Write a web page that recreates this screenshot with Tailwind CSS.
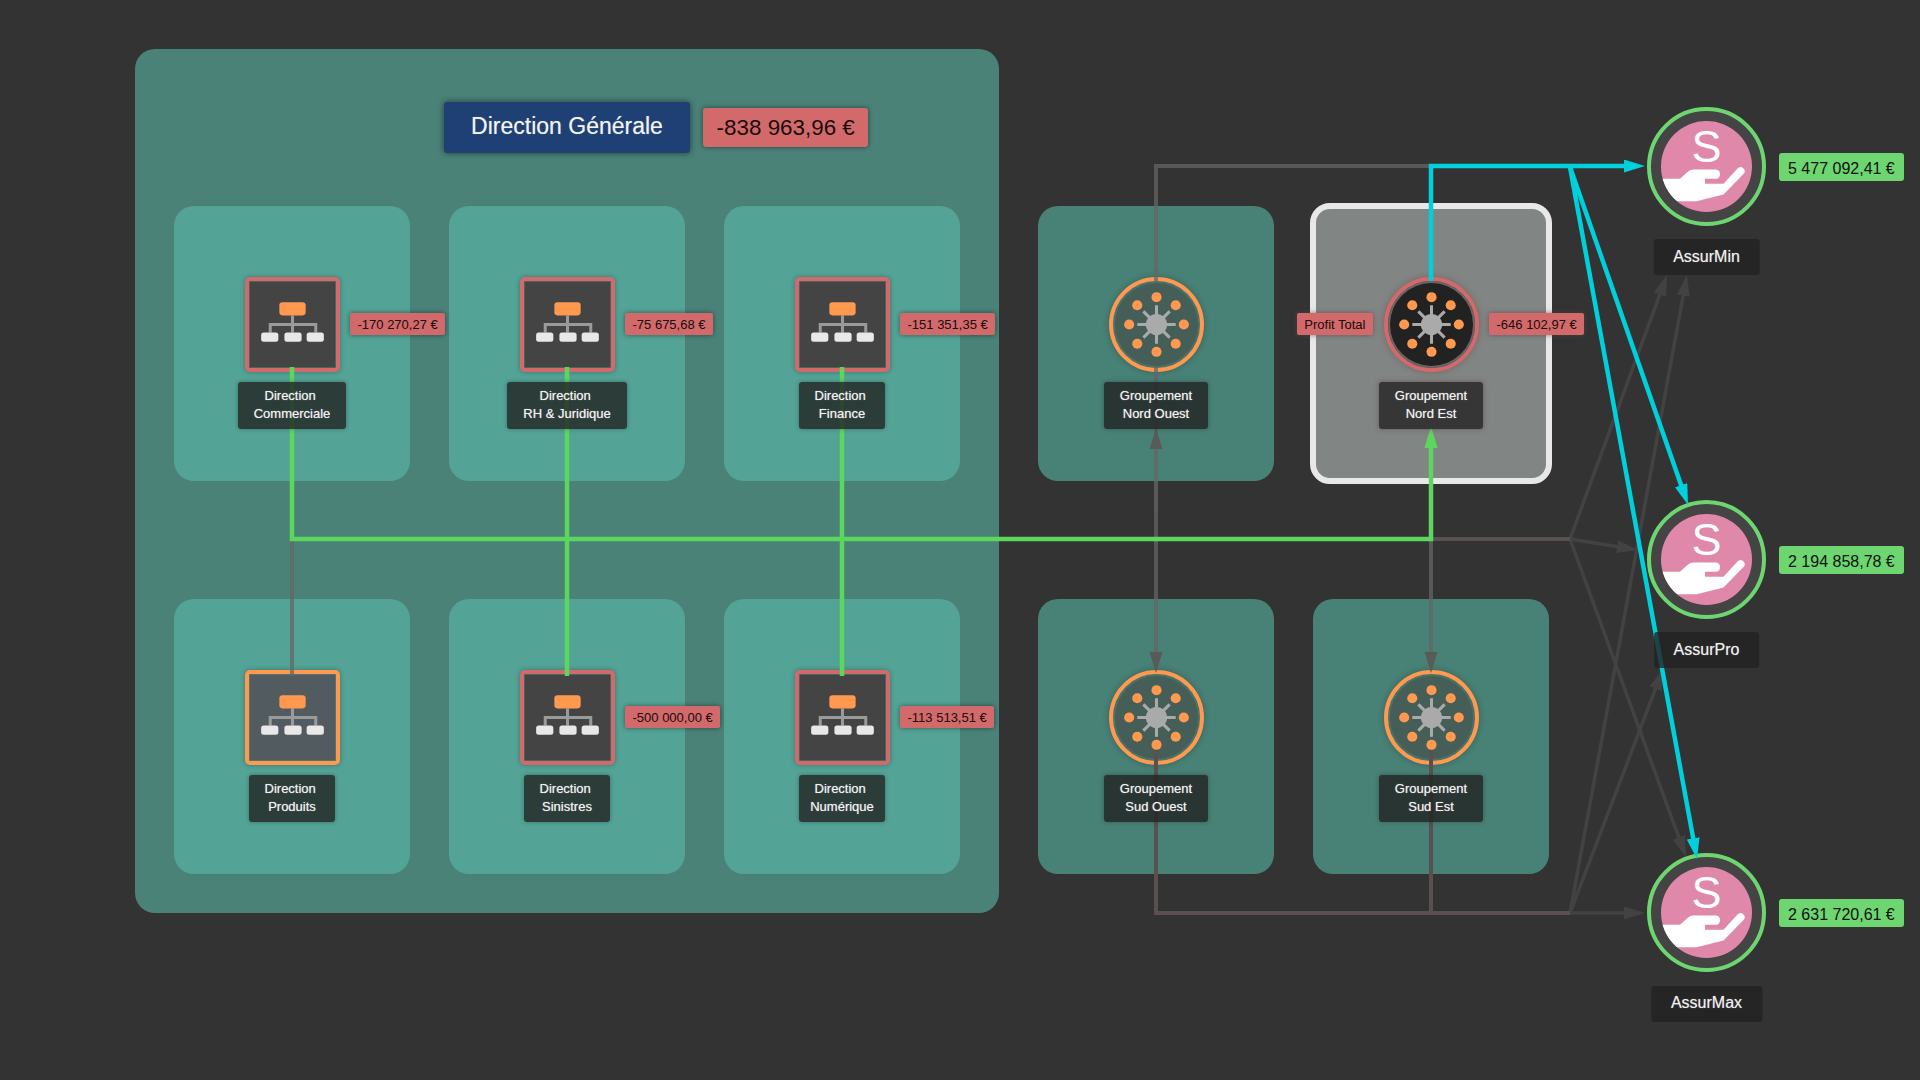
<!DOCTYPE html>
<html lang="fr">
<head>
    <meta charset="UTF-8">
    <title>Direction Générale - Groupements</title>
    <script src="https://cdn.jsdelivr.net/npm/@tailwindcss/browser@4"></script>
</head>
<body class="bg-[#333] font-['Liberation_Sans',Arial,sans-serif]">

    <!-- icones -->
    <svg class="hidden">
        <symbol id="org" viewBox="4 4 86 86">
            <path d="M47 38V55M25 55V47H70V55" fill="none" stroke="#9a9a9a" stroke-width="3"/>
            <rect x="34" y="25" width="26" height="13" rx="3" fill="#ff9950"/>
            <rect x="16" y="55" width="17" height="9" rx="2.5" fill="#e8e8e8"/>
            <rect x="39" y="55" width="17" height="9" rx="2.5" fill="#e8e8e8"/>
            <rect x="61" y="55" width="17" height="9" rx="2.5" fill="#e8e8e8"/>
        </symbol>
        <symbol id="virus" viewBox="4 4 86 86">
            <path d="M47 28V66M28 47H66M34 34L60 60M60 34L34 60" stroke="#aaa" stroke-width="3" fill="none"/>
            <circle cx="47" cy="47" r="10.5" fill="#aaa"/>
            <g fill="#ff9950">
                <circle cx="47" cy="20" r="5"/><circle cx="47" cy="74" r="5"/>
                <circle cx="20" cy="47" r="5"/><circle cx="74" cy="47" r="5"/>
                <circle cx="28" cy="28" r="5"/><circle cx="66" cy="28" r="5"/>
                <circle cx="28" cy="66" r="5"/><circle cx="66" cy="66" r="5"/>
            </g>
        </symbol>
        <symbol id="assur" viewBox="-45.5 -45.5 91 91">
            <path fill="#fff" d="M-50 12.3H-26.5L-19 5.5Q-17 3-13 3H9.5A4.7 4.7 0 0 1 9.5 12.3H-1.5V17.3H17L31 2A4 4 0 0 1 37 7.5L17 28L-10 34.7H-50Z"/>
            <text x="0" y="-5" text-anchor="middle" font-size="45" fill="#fff" font-family="Liberation Sans">S</text>
        </symbol>
    </svg>

    <div class="relative w-[1920px] h-[1080px] overflow-hidden flex items-start pt-[49px] pl-[135px]">

        <!-- liens -->
        <svg class="absolute inset-0 z-10 w-[1920px] h-[1080px]" fill="none">
            <defs>
                <marker id="headCyan" viewBox="0 0 21 13" refX="10" refY="6.5" markerWidth="21" markerHeight="13" markerUnits="userSpaceOnUse" orient="auto"><path d="M0 0L21 6.5L0 13Z" fill="#00d0dc"/></marker>
                <marker id="headFan" viewBox="0 0 21 13" refX="10" refY="6.5" markerWidth="21" markerHeight="13" markerUnits="userSpaceOnUse" orient="auto"><path d="M0 0L21 6.5L0 13Z" fill="#666"/></marker>
            </defs>

            <!-- sorties vers les produits -->
            <g stroke="#666" stroke-width="3.5" opacity=".3">
                <path d="M1570 539L1663.2 285.3" marker-end="url(#headFan)"/>
                <path d="M1570 539L1627.1 548.2" marker-end="url(#headFan)"/>
                <path d="M1570 539L1682.2 846.7" marker-end="url(#headFan)"/>
                <path d="M1570 913L1634 913" marker-end="url(#headFan)"/>
                <path d="M1570 913L1659.1 679.3" marker-end="url(#headFan)"/>
                <path d="M1570 913L1685 285.8" marker-end="url(#headFan)"/>
            </g>

            <!-- gris -->
            <g stroke="#666" stroke-width="4" opacity=".75">
                <path d="M292 539V676"/>
                <path d="M1156 281V166H1431"/>
                <path d="M1156 367V660"/>
                <path d="M1431 539V660"/>
            </g>
            <g stroke="#5a5050" stroke-width="4">
                <path d="M1156 750V913H1570"/>
                <path d="M1431 750V913"/>
                <path d="M1431 539H1570"/>
            </g>
            <g fill="#595b59">
                <path d="M1156 428L1149.5 449H1162.5Z"/>
                <path d="M1156 673L1149.5 652H1162.5Z"/>
                <path d="M1431 673L1424.5 652H1437.5Z"/>
            </g>

            <!-- vert -->
            <g stroke="#5cd65c" stroke-width="4.5">
                <path d="M292 367V539H1431V445"/>
                <path d="M567 367V676"/>
                <path d="M842 367V676"/>
            </g>
            <path d="M1431 426L1424.5 448H1437.5Z" fill="#5cd65c"/>

            <!-- cyan -->
            <g stroke="#00d0dc" stroke-width="4.5">
                <path d="M1431 281V166H1634" marker-end="url(#headCyan)"/>
                <path d="M1570 167L1684.4 494.6" marker-end="url(#headCyan)"/>
                <path d="M1570 167L1695 848.2" marker-end="url(#headCyan)"/>
            </g>
        </svg>

        <!-- direction generale -->
        <div class="w-[864px] h-[864px] shrink-0 rounded-[20px] bg-[#4a8278] pt-[53px] px-[39px]">
            <div class="flex justify-center mb-[53px]">
                <div class="relative h-[51px] px-[27px] pb-[3px] flex items-center rounded-[3px] bg-[#1f4075] text-[23px] text-[#f4f4f4] [text-shadow:0_0_1px_rgba(255,255,255,.4)] shadow-[0_0_6px_rgba(0,0,0,.55)]">
                    Direction Générale
                    <div class="absolute left-[259px] top-[6px] h-[39px] px-[13.5px] flex items-center whitespace-nowrap rounded-[3px] bg-[#d26a6c] text-[22.4px] text-[#1a0a0a] [text-shadow:none] shadow-[0_0_5px_rgba(0,0,0,.5)]">-838 963,96 €</div>
                </div>
            </div>

            <div class="grid grid-cols-[repeat(3,236px)] gap-x-[39px] gap-y-[118px]">
                <div class="h-[275px] rounded-[20px] bg-[#53a396] flex flex-col items-center pt-[70.5px]">
                    <div class="relative w-[95px] h-[95px] rounded-[5px] border-4 border-[#d26a6c] bg-[#444] shadow-[0_0_5px_rgba(0,0,0,.3),inset_0_0_0_1px_rgba(83,163,150,.35)]">
                        <svg class="w-full h-full"><use href="#org"/></svg>
                        <div class="absolute z-20 left-[101.5px] top-[32.5px] h-[22px] px-[7.5px] pt-[2px] flex items-center whitespace-nowrap rounded-[2px] bg-[#d26a6c] text-[13px] text-[#1a0a0a] shadow-[0_0_5px_rgba(0,0,0,.45)]">-170 270,27 €</div>
                    </div>
                    <div class="relative z-20 mt-[10.5px] h-[47px] px-[16px] pb-[2px] flex items-center text-center rounded-[3px] bg-[#222]/80 text-[13px] leading-[18px] text-[#f2f2f2] [text-shadow:0_0_1px_rgba(255,255,255,.6)] shadow-[0_0_4px_rgba(0,0,0,.3)]">Direction&nbsp;<br>Commerciale</div>
                </div>
                <div class="h-[275px] rounded-[20px] bg-[#53a396] flex flex-col items-center pt-[70.5px]">
                    <div class="relative w-[95px] h-[95px] rounded-[5px] border-4 border-[#d26a6c] bg-[#444] shadow-[0_0_5px_rgba(0,0,0,.3),inset_0_0_0_1px_rgba(83,163,150,.35)]">
                        <svg class="w-full h-full"><use href="#org"/></svg>
                        <div class="absolute z-20 left-[101.5px] top-[32.5px] h-[22px] px-[7.5px] pt-[2px] flex items-center whitespace-nowrap rounded-[2px] bg-[#d26a6c] text-[13px] text-[#1a0a0a] shadow-[0_0_5px_rgba(0,0,0,.45)]">-75 675,68 €</div>
                    </div>
                    <div class="relative z-20 mt-[10.5px] h-[47px] px-[16px] pb-[2px] flex items-center text-center rounded-[3px] bg-[#222]/80 text-[13px] leading-[18px] text-[#f2f2f2] [text-shadow:0_0_1px_rgba(255,255,255,.6)] shadow-[0_0_4px_rgba(0,0,0,.3)]">Direction&nbsp;<br>RH &amp; Juridique</div>
                </div>
                <div class="h-[275px] rounded-[20px] bg-[#53a396] flex flex-col items-center pt-[70.5px]">
                    <div class="relative w-[95px] h-[95px] rounded-[5px] border-4 border-[#d26a6c] bg-[#444] shadow-[0_0_5px_rgba(0,0,0,.3),inset_0_0_0_1px_rgba(83,163,150,.35)]">
                        <svg class="w-full h-full"><use href="#org"/></svg>
                        <div class="absolute z-20 left-[101.5px] top-[32.5px] h-[22px] px-[7.5px] pt-[2px] flex items-center whitespace-nowrap rounded-[2px] bg-[#d26a6c] text-[13px] text-[#1a0a0a] shadow-[0_0_5px_rgba(0,0,0,.45)]">-151 351,35 €</div>
                    </div>
                    <div class="relative z-20 mt-[10.5px] h-[47px] px-[16px] pb-[2px] flex items-center text-center rounded-[3px] bg-[#222]/80 text-[13px] leading-[18px] text-[#f2f2f2] [text-shadow:0_0_1px_rgba(255,255,255,.6)] shadow-[0_0_4px_rgba(0,0,0,.3)]">Direction&nbsp;<br>Finance</div>
                </div>
                <div class="h-[275px] rounded-[20px] bg-[#53a396] flex flex-col items-center pt-[70.5px]">
                    <div class="relative w-[95px] h-[95px] rounded-[5px] border-4 border-[#ff9950] bg-[#525c60] shadow-[0_0_5px_rgba(0,0,0,.3),inset_0_0_0_1px_rgba(83,163,150,.35)]">
                        <svg class="w-full h-full"><use href="#org"/></svg>
                    </div>
                    <div class="relative z-20 mt-[10.5px] h-[47px] px-[16px] pb-[2px] flex items-center text-center rounded-[3px] bg-[#222]/80 text-[13px] leading-[18px] text-[#f2f2f2] [text-shadow:0_0_1px_rgba(255,255,255,.6)] shadow-[0_0_4px_rgba(0,0,0,.3)]">Direction&nbsp;<br>Produits</div>
                </div>
                <div class="h-[275px] rounded-[20px] bg-[#53a396] flex flex-col items-center pt-[70.5px]">
                    <div class="relative w-[95px] h-[95px] rounded-[5px] border-4 border-[#d26a6c] bg-[#444] shadow-[0_0_5px_rgba(0,0,0,.3),inset_0_0_0_1px_rgba(83,163,150,.35)]">
                        <svg class="w-full h-full"><use href="#org"/></svg>
                        <div class="absolute z-20 left-[101.5px] top-[32.5px] h-[22px] px-[7.5px] pt-[2px] flex items-center whitespace-nowrap rounded-[2px] bg-[#d26a6c] text-[13px] text-[#1a0a0a] shadow-[0_0_5px_rgba(0,0,0,.45)]">-500 000,00 €</div>
                    </div>
                    <div class="relative z-20 mt-[10.5px] h-[47px] px-[16px] pb-[2px] flex items-center text-center rounded-[3px] bg-[#222]/80 text-[13px] leading-[18px] text-[#f2f2f2] [text-shadow:0_0_1px_rgba(255,255,255,.6)] shadow-[0_0_4px_rgba(0,0,0,.3)]">Direction&nbsp;<br>Sinistres</div>
                </div>
                <div class="h-[275px] rounded-[20px] bg-[#53a396] flex flex-col items-center pt-[70.5px]">
                    <div class="relative w-[95px] h-[95px] rounded-[5px] border-4 border-[#d26a6c] bg-[#444] shadow-[0_0_5px_rgba(0,0,0,.3),inset_0_0_0_1px_rgba(83,163,150,.35)]">
                        <svg class="w-full h-full"><use href="#org"/></svg>
                        <div class="absolute z-20 left-[101.5px] top-[32.5px] h-[22px] px-[7.5px] pt-[2px] flex items-center whitespace-nowrap rounded-[2px] bg-[#d26a6c] text-[13px] text-[#1a0a0a] shadow-[0_0_5px_rgba(0,0,0,.45)]">-113 513,51 €</div>
                    </div>
                    <div class="relative z-20 mt-[10.5px] h-[47px] px-[11px] pb-[2px] flex items-center text-center rounded-[3px] bg-[#222]/80 text-[13px] leading-[18px] text-[#f2f2f2] [text-shadow:0_0_1px_rgba(255,255,255,.6)] shadow-[0_0_4px_rgba(0,0,0,.3)]">Direction&nbsp;<br>Numérique</div>
                </div>
            </div>
        </div>

        <!-- groupements -->
        <div class="ml-[39px] mt-[157px] shrink-0 grid grid-cols-[repeat(2,236px)] gap-x-[39px] gap-y-[118px]">
            <div class="h-[275px] rounded-[20px] bg-[#488176] flex flex-col items-center pt-[70.5px]">
                <div class="relative w-[95px] h-[95px] rounded-full border-4 border-[#ff9950] bg-[#455f58] shadow-[0_0_6px_rgba(0,0,0,.25),inset_0_0_0_2px_rgba(72,129,118,.6)]">
                    <svg class="w-full h-full"><use href="#virus"/></svg>
                </div>
                <div class="relative z-20 mt-[10.5px] h-[47px] px-[16px] pb-[2px] flex items-center text-center rounded-[3px] bg-[#222]/80 text-[13px] leading-[18px] text-[#f2f2f2] [text-shadow:0_0_1px_rgba(255,255,255,.6)] shadow-[0_0_4px_rgba(0,0,0,.3)]">Groupement<br>Nord Ouest</div>
            </div>
            <!-- selection -->
            <div class="h-[281px] w-[242px] -m-[3px] rounded-[20px] border-[6px] border-[#e8e8e8] bg-[#818583] flex flex-col items-center pt-[67.5px]">
                <div class="relative w-[95px] h-[95px] rounded-full border-4 border-[#d26a6c] bg-[#222] shadow-[0_0_6px_rgba(120,90,90,.8),inset_0_0_0_2px_#666]">
                    <svg class="w-full h-full"><use href="#virus"/></svg>
                    <div class="absolute z-20 right-[101.5px] top-[32.5px] h-[22px] px-[7.5px] pt-[2px] flex items-center whitespace-nowrap rounded-[2px] bg-[#d26a6c] text-[13px] text-[#1a0a0a] shadow-[0_0_5px_rgba(90,70,70,.7)]">Profit Total</div>
                    <div class="absolute z-20 left-[101.5px] top-[32.5px] h-[22px] px-[7.5px] pt-[2px] flex items-center whitespace-nowrap rounded-[2px] bg-[#d26a6c] text-[13px] text-[#1a0a0a] shadow-[0_0_5px_rgba(90,70,70,.7)]">-646 102,97 €</div>
                </div>
                <div class="relative z-20 mt-[10.5px] h-[47px] px-[16px] pb-[2px] flex items-center text-center rounded-[3px] bg-[#222]/80 text-[13px] leading-[18px] text-[#f2f2f2] [text-shadow:0_0_1px_rgba(255,255,255,.6)] shadow-[0_0_5px_rgba(90,70,70,.7)]">Groupement<br>Nord Est</div>
            </div>
            <div class="h-[275px] rounded-[20px] bg-[#488176] flex flex-col items-center pt-[70.5px]">
                <div class="relative w-[95px] h-[95px] rounded-full border-4 border-[#ff9950] bg-[#455f58] shadow-[0_0_6px_rgba(0,0,0,.25),inset_0_0_0_2px_rgba(72,129,118,.6)]">
                    <svg class="w-full h-full"><use href="#virus"/></svg>
                </div>
                <div class="relative z-20 mt-[10.5px] h-[47px] px-[16px] pb-[2px] flex items-center text-center rounded-[3px] bg-[#222]/80 text-[13px] leading-[18px] text-[#f2f2f2] [text-shadow:0_0_1px_rgba(255,255,255,.6)] shadow-[0_0_4px_rgba(0,0,0,.3)]">Groupement<br>Sud Ouest</div>
            </div>
            <div class="h-[275px] rounded-[20px] bg-[#488176] flex flex-col items-center pt-[70.5px]">
                <div class="relative w-[95px] h-[95px] rounded-full border-4 border-[#ff9950] bg-[#455f58] shadow-[0_0_6px_rgba(0,0,0,.25),inset_0_0_0_2px_rgba(72,129,118,.6)]">
                    <svg class="w-full h-full"><use href="#virus"/></svg>
                </div>
                <div class="relative z-20 mt-[10.5px] h-[47px] px-[16px] pb-[2px] flex items-center text-center rounded-[3px] bg-[#222]/80 text-[13px] leading-[18px] text-[#f2f2f2] [text-shadow:0_0_1px_rgba(255,255,255,.6)] shadow-[0_0_4px_rgba(0,0,0,.3)]">Groupement<br>Sud Est</div>
            </div>
        </div>

        <!-- produits -->
        <div class="ml-[98px] mt-[58px] shrink-0 flex flex-col">
            <div class="relative w-[119px] h-[119px] rounded-full border-4 border-[#6dd670] bg-[#444] flex items-center justify-center">
                <div class="w-[91px] h-[91px] rounded-full overflow-hidden bg-[#e088aa]"><svg class="w-full h-full"><use href="#assur"/></svg></div>
                <div class="absolute z-20 left-[128px] top-[42px] h-[28px] px-[9px] pt-[3px] flex items-center whitespace-nowrap rounded-[3px] bg-[#6dd670] text-[16px] text-[#111]">5 477 092,41 €</div>
                <div class="absolute z-20 left-1/2 -translate-x-1/2 top-[128px] h-[36px] px-[20px] flex items-center whitespace-nowrap rounded-[3px] bg-[#222]/80 text-[16px] text-[#f0f0f0] [text-shadow:0_0_1px_rgba(255,255,255,.5)]">AssurMin</div>
            </div>
            <div class="relative mt-[274px] w-[119px] h-[119px] rounded-full border-4 border-[#6dd670] bg-[#444] flex items-center justify-center">
                <div class="w-[91px] h-[91px] rounded-full overflow-hidden bg-[#e088aa]"><svg class="w-full h-full"><use href="#assur"/></svg></div>
                <div class="absolute z-20 left-[128px] top-[42px] h-[28px] px-[9px] pt-[3px] flex items-center whitespace-nowrap rounded-[3px] bg-[#6dd670] text-[16px] text-[#111]">2 194 858,78 €</div>
                <div class="absolute z-20 left-1/2 -translate-x-1/2 top-[128px] h-[36px] px-[20px] flex items-center whitespace-nowrap rounded-[3px] bg-[#222]/80 text-[16px] text-[#f0f0f0] [text-shadow:0_0_1px_rgba(255,255,255,.5)]">AssurPro</div>
            </div>
            <div class="relative mt-[234px] w-[119px] h-[119px] rounded-full border-4 border-[#6dd670] bg-[#444] flex items-center justify-center">
                <div class="w-[91px] h-[91px] rounded-full overflow-hidden bg-[#e088aa]"><svg class="w-full h-full"><use href="#assur"/></svg></div>
                <div class="absolute z-20 left-[128px] top-[42px] h-[28px] px-[9px] pt-[3px] flex items-center whitespace-nowrap rounded-[3px] bg-[#6dd670] text-[16px] text-[#111]">2 631 720,61 €</div>
                <div class="absolute z-20 left-1/2 -translate-x-1/2 top-[129px] h-[36px] px-[20px] pb-[2px] flex items-center whitespace-nowrap rounded-[3px] bg-[#222]/80 text-[16px] text-[#f0f0f0] [text-shadow:0_0_1px_rgba(255,255,255,.5)]">AssurMax</div>
            </div>
        </div>
    </div>

</body>
</html>
